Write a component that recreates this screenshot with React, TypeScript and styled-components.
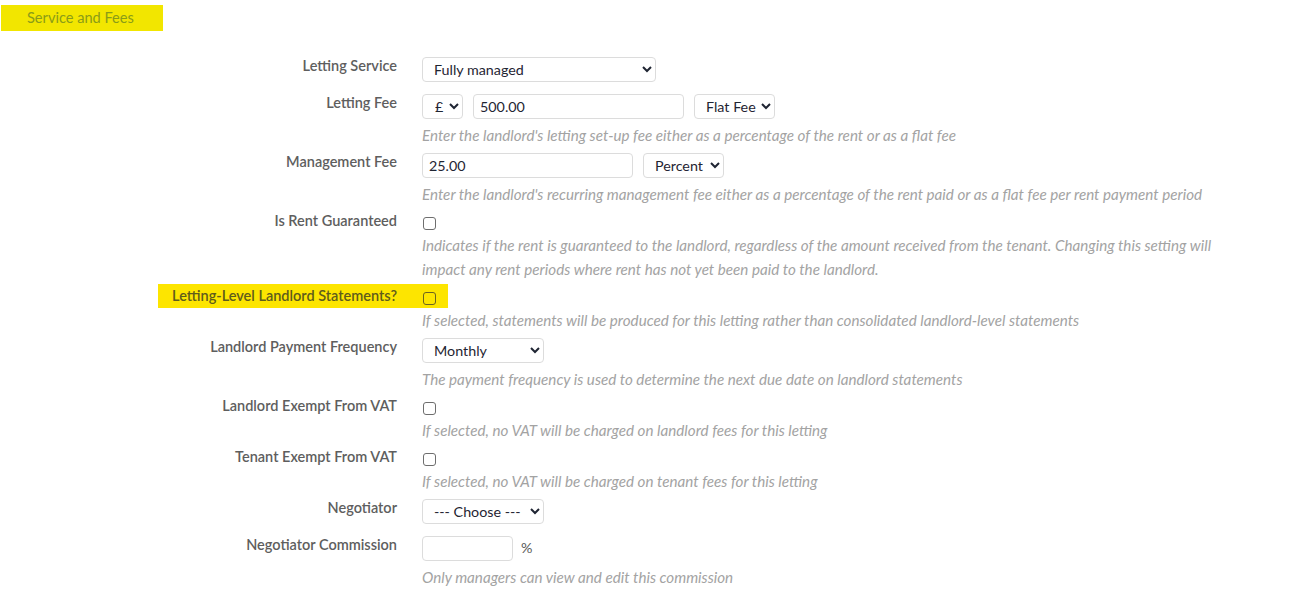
import React from 'react';
import styled, { createGlobalStyle } from 'styled-components';

const GlobalStyle = createGlobalStyle`
  body {
    margin: 0;
    background: #ffffff;
    font-family: Lato, "Liberation Sans", sans-serif;
  }
`;

interface IFieldProps {
  label: string;
  help?: string[];
  highlight?: boolean;
  check?: boolean;
  children?: React.ReactNode;
}

const Field: React.FC<IFieldProps> = (props: IFieldProps) => {
  const { label, help, highlight, check, children } = props;
  return (
    <Row $hasHelp={!!help}>
      {highlight && <Highlight />}
      <Label $highlight={!!highlight}>{label}</Label>
      <Control>
        {check ? (
          <CheckWrap>
            <Check type='checkbox' $highlight={!!highlight} />
          </CheckWrap>
        ) : (
          <Inline>{children}</Inline>
        )}
        {help && (
          <Help>
            {help.map((line) => (
              <div key={line}>{line}</div>
            ))}
          </Help>
        )}
      </Control>
    </Row>
  );
};

const App: React.FC = () => {
  return (
    <Page>
      <GlobalStyle />
      <Header>Service and Fees</Header>
      <Form>
        <Field label='Letting Service'>
          <Select $w='234px' defaultValue='full'>
            <option value='full'>Fully managed</option>
            <option value='let'>Let only</option>
          </Select>
        </Field>
        <Field
          label='Letting Fee'
          help={["Enter the landlord's letting set-up fee either as a percentage of the rent or as a flat fee"]}
        >
          <Select $w='41px' $pad='8px'>
            <option>£</option>
          </Select>
          <Input $w='211px' defaultValue='500.00' />
          <Select $w='81px'>
            <option>Flat Fee</option>
          </Select>
        </Field>
        <Field
          label='Management Fee'
          help={[
            "Enter the landlord's recurring management fee either as a percentage of the rent paid or as a flat fee per rent payment period",
          ]}
        >
          <Input $w='211px' defaultValue='25.00' />
          <Select $w='81px'>
            <option>Percent</option>
          </Select>
        </Field>
        <Field
          label='Is Rent Guaranteed'
          check
          help={[
            'Indicates if the rent is guaranteed to the landlord, regardless of the amount received from the tenant. Changing this setting will',
            'impact any rent periods where rent has not yet been paid to the landlord.',
          ]}
        />
        <Field
          label='Letting-Level Landlord Statements?'
          check
          highlight
          help={['If selected, statements will be produced for this letting rather than consolidated landlord-level statements']}
        />
        <Field
          label='Landlord Payment Frequency'
          help={['The payment frequency is used to determine the next due date on landlord statements']}
        >
          <Select $w='122px'>
            <option>Monthly</option>
          </Select>
        </Field>
        <Field
          label='Landlord Exempt From VAT'
          check
          help={['If selected, no VAT will be charged on landlord fees for this letting']}
        />
        <Field
          label='Tenant Exempt From VAT'
          check
          help={['If selected, no VAT will be charged on tenant fees for this letting']}
        />
        <Field label='Negotiator'>
          <Select $w='122px'>
            <option>--- Choose ---</option>
          </Select>
        </Field>
        <Field label='Negotiator Commission' help={['Only managers can view and edit this commission']}>
          <Input $w='91px' />
          <Unit>%</Unit>
        </Field>
      </Form>
    </Page>
  );
};

const Page = styled.div`
  width: 1294px;
  min-height: 590px;
  padding-top: 5px;
  box-sizing: border-box;
`;

const Header = styled.div`
  width: 162px;
  height: 26px;
  margin-left: 1px;
  box-sizing: border-box;
  padding-left: 26px;
  background: #f2e600;
  color: #8a9c18;
  font-size: 14.6px;
  line-height: 26px;
`;

const Form = styled.div`
  margin-top: 26px;
`;

const Row = styled.div<{ $hasHelp: boolean }>`
  position: relative;
  display: grid;
  grid-template-columns: 397px 1fr;
  column-gap: 25px;
  margin-bottom: ${(p) => (p.$hasHelp ? '6px' : '12px')};
`;

const Highlight = styled.div`
  position: absolute;
  left: 158px;
  top: -3px;
  width: 290px;
  height: 24px;
  background: #fde500;
`;

const Label = styled.div<{ $highlight: boolean }>`
  position: relative;
  text-align: right;
  font-size: 14.5px;
  font-weight: 600;
  line-height: 20px;
  margin-top: -1px;
  color: ${(p) => (p.$highlight ? '#5f5c1c' : '#5e5e5e')};
`;

const Control = styled.div`
  position: relative;
  display: flex;
  flex-direction: column;
`;

const Inline = styled.div`
  display: flex;
  align-items: center;
  gap: 10px;
`;

const Select = styled.select<{ $w: string; $pad?: string }>`
  width: ${(p) => p.$w};
  height: 25px;
  box-sizing: border-box;
  border: 1px solid #dcdcdc;
  border-radius: 4px;
  background: #ffffff;
  padding: 0 2px 0 ${(p) => p.$pad || '7px'};
  font-family: Lato, "Liberation Sans", sans-serif;
  font-size: 14.3px;
  color: #1f2533;
`;

const Input = styled.input<{ $w: string }>`
  width: ${(p) => p.$w};
  height: 25px;
  box-sizing: border-box;
  border: 1px solid #dcdcdc;
  border-radius: 4px;
  padding: 0 6px;
  font-family: Lato, "Liberation Sans", sans-serif;
  font-size: 14.3px;
  color: #1f2533;
`;

const Unit = styled.span`
  font-size: 14.3px;
  color: #5a5a5a;
  margin-left: -2px;
  margin-top: -2px;
`;

const CheckWrap = styled.div`
  height: 17px;
`;

const Check = styled.input<{ $highlight: boolean }>`
  width: 13px;
  height: 13px;
  margin: 5px 0 0 1px;
  appearance: none;
  box-sizing: border-box;
  border: 1px solid ${(p) => (p.$highlight ? '#6b6420' : '#6e6e6e')};
  border-radius: 3px;
  background: ${(p) => (p.$highlight ? 'transparent' : '#ffffff')};
`;

const Help = styled.div`
  margin-top: 4px;
  font-size: 15.2px;
  font-style: italic;
  line-height: 24px;
  color: #a3a3a3;
  white-space: nowrap;
`;

export default App;
